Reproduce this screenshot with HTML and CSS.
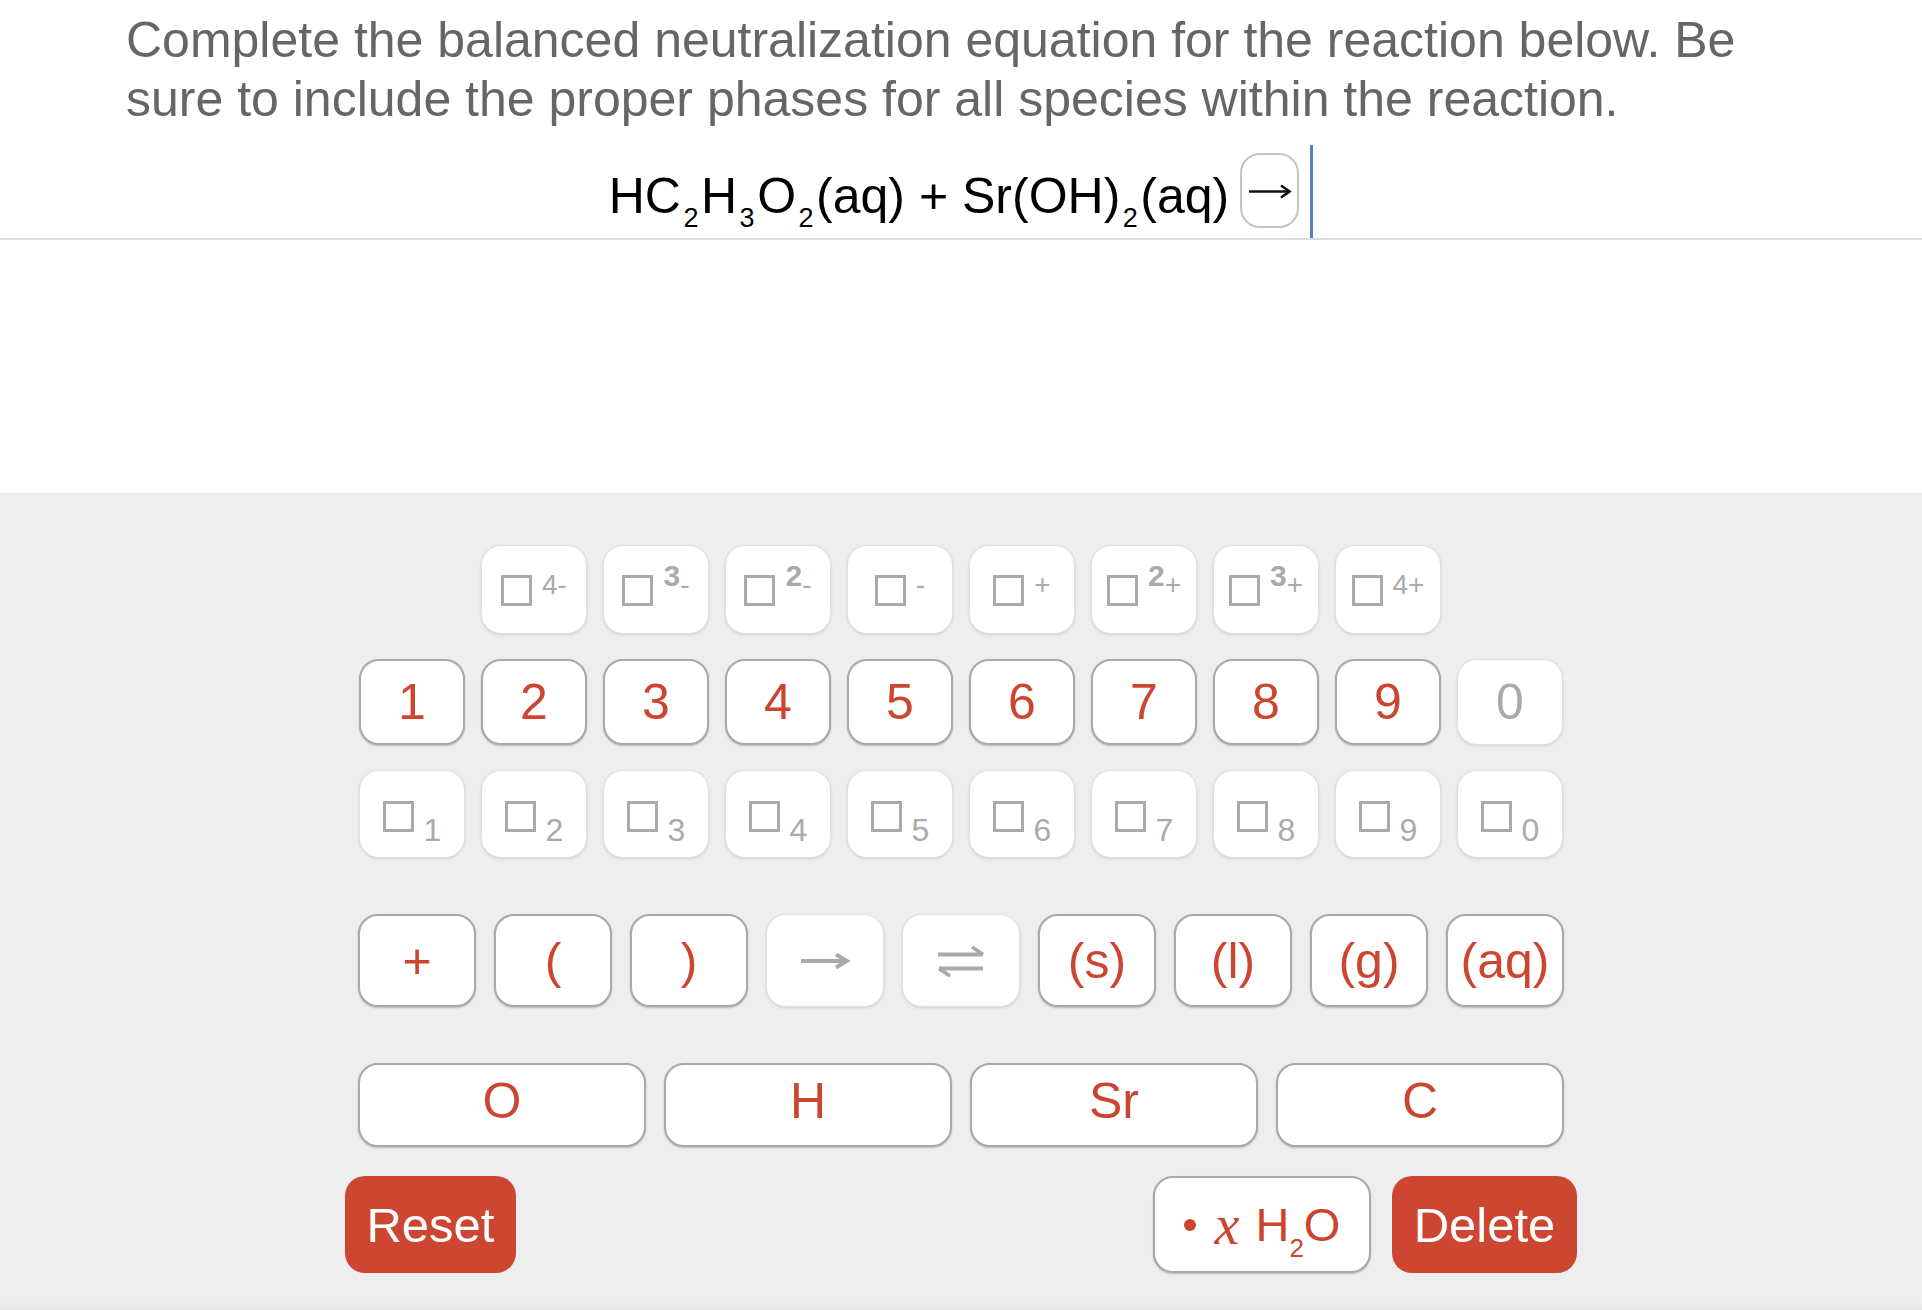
FILE: index.html
```html
<!DOCTYPE html>
<html lang="en">
<head>
<meta charset="utf-8">
<title>Neutralization equation</title>
<link rel="stylesheet" href="styles.css">
</head>
<body>
<p class="prompt">Complete the balanced neutralization equation for the reaction below. Be sure to include the proper phases for all species within the reaction.</p>

<div class="eq">
  <div class="formula">HC<span class="s">2</span>H<span class="s">3</span>O<span class="s">2</span>(aq) + Sr(OH)<span class="s">2</span>(aq)</div>
  <div class="arrowbox">
    <svg width="44" height="16" viewBox="0 0 44 16"><path d="M1 8.5H41" stroke="#111" stroke-width="2.6"/><path d="M33 2.5L41.5 8.5L33 14.5" fill="none" stroke="#111" stroke-width="2.6" stroke-linejoin="miter"/></svg>
  </div>
  <div class="caret"></div>
</div>

<div class="keyboard">
  <div class="row row-sup">
    <div class="key off small"><span class="sq"></span><span class="sup">4-</span></div>
    <div class="key off small"><span class="sq"></span><span class="sup"><span class="hi">3</span>-</span></div>
    <div class="key off small"><span class="sq"></span><span class="sup"><span class="hi">2</span>-</span></div>
    <div class="key off small"><span class="sq"></span><span class="sup">-</span></div>
    <div class="key off small"><span class="sq"></span><span class="sup">+</span></div>
    <div class="key off small"><span class="sq"></span><span class="sup"><span class="hi">2</span>+</span></div>
    <div class="key off small"><span class="sq"></span><span class="sup"><span class="hi">3</span>+</span></div>
    <div class="key off small"><span class="sq"></span><span class="sup">4+</span></div>
  </div>

  <div class="row row-num">
    <div class="key on small">1</div>
    <div class="key on small">2</div>
    <div class="key on small">3</div>
    <div class="key on small">4</div>
    <div class="key on small">5</div>
    <div class="key on small">6</div>
    <div class="key on small">7</div>
    <div class="key on small">8</div>
    <div class="key on small">9</div>
    <div class="key off small">0</div>
  </div>

  <div class="row row-sub">
    <div class="key off small"><span class="sq"></span><span class="subd">1</span></div>
    <div class="key off small"><span class="sq"></span><span class="subd">2</span></div>
    <div class="key off small"><span class="sq"></span><span class="subd">3</span></div>
    <div class="key off small"><span class="sq"></span><span class="subd">4</span></div>
    <div class="key off small"><span class="sq"></span><span class="subd">5</span></div>
    <div class="key off small"><span class="sq"></span><span class="subd">6</span></div>
    <div class="key off small"><span class="sq"></span><span class="subd">7</span></div>
    <div class="key off small"><span class="sq"></span><span class="subd">8</span></div>
    <div class="key off small"><span class="sq"></span><span class="subd">9</span></div>
    <div class="key off small"><span class="sq"></span><span class="subd">0</span></div>
  </div>

  <div class="row row-sym">
    <div class="key on">+</div>
    <div class="key on">(</div>
    <div class="key on">)</div>
    <div class="key off">
      <svg width="50" height="18" viewBox="0 0 50 18"><path d="M1 9H44" stroke="#aaa" stroke-width="4"/><path d="M36 2.5L47 9L36 15.5" fill="none" stroke="#aaa" stroke-width="4"/></svg>
    </div>
    <div class="key off">
      <svg width="48" height="32" viewBox="0 0 48 32"><path d="M1 9.5H46M35 2L46 9.5" fill="none" stroke="#aaa" stroke-width="3.8"/><path d="M2 23.5H46M2 23.5L13 31" fill="none" stroke="#aaa" stroke-width="3.8"/></svg>
    </div>
    <div class="key on">(s)</div>
    <div class="key on">(l)</div>
    <div class="key on">(g)</div>
    <div class="key on">(aq)</div>
  </div>

  <div class="row row-el">
    <div class="key on">O</div>
    <div class="key on">H</div>
    <div class="key on">Sr</div>
    <div class="key on">C</div>
  </div>

  <div class="bottom">
    <div class="btn-red reset">Reset</div>
    <div class="right">
      <div class="key on hydrate"><span class="dot"></span><span class="mx">x</span><span class="h2o">H<span class="s2">2</span>O</span></div>
      <div class="btn-red delete">Delete</div>
    </div>
  </div>
</div>
</body>
</html>
```

FILE: styles.css
```css
html, body {
  margin: 0;
  padding: 0;
  background: #fff;
}

body {
  font-family: "Liberation Sans", Arial, Helvetica, sans-serif;
  width: 1922px;
  height: 1310px;
  overflow: hidden;
}

.prompt {
  margin: 0;
  padding: 11px 0 0 126px;
  max-width: 1660px;
  font-size: 50px;
  line-height: 59px;
  color: #666;
}

.eq {
  height: 109px;
  border-bottom: 2px solid #dcdcdc;
  display: flex;
  justify-content: center;
  align-items: flex-end;
  gap: 11px;
}

.formula {
  font-size: 50px;
  line-height: 50px;
  color: #000;
  white-space: nowrap;
  margin-bottom: 17px;
}

.formula .s {
  font-size: 27px;
  line-height: 0;
  vertical-align: -14px;
  margin: 0 2.5px;
}

.arrowbox {
  box-sizing: border-box;
  width: 59px;
  height: 75px;
  border: 2px solid #c4c4c4;
  border-radius: 20px;
  margin-bottom: 10px;
  display: flex;
  align-items: center;
  justify-content: center;
}

.caret {
  width: 3px;
  height: 93px;
  background: #5b7db3;
}

.keyboard {
  box-sizing: border-box;
  margin-top: 253px;
  height: 817px;
  padding-top: 52px;
  background: linear-gradient(to bottom, #eeeeee calc(100% - 8px), #e4e4e4);
  display: flex;
  flex-direction: column;
  align-items: center;
}

.row {
  display: flex;
  gap: 16px;
}

.key {
  box-sizing: border-box;
  background: #fff;
  border-radius: 20px;
  display: flex;
  align-items: center;
  justify-content: center;
  color: #cc4530;
  font-size: 50px;
  line-height: 1;
}

.key.on {
  border: 2px solid #a9a9a9;
  box-shadow: 0 1px 2px rgba(0, 0, 0, 0.22);
}

.key.off {
  border: 1px solid #e0e0e0;
  box-shadow: 0 1px 3px rgba(0, 0, 0, 0.12);
  color: #aaa;
}

.small {
  width: 106px;
}

.row-sup .key {
  height: 89px;
  align-items: flex-start;
  padding-top: 29px;
}

.row-num {
  margin-top: 25px;
}

.row-num .key {
  height: 86px;
}

.row-sub {
  margin-top: 25px;
}

.row-sub .key {
  height: 88px;
  align-items: flex-start;
  padding-top: 30px;
}

.sq {
  flex: none;
  box-sizing: border-box;
  width: 31px;
  height: 31px;
  border: 3px solid #aaa;
}

.sup {
  font-size: 28px;
  line-height: 28px;
  margin: -4px 0 0 10px;
  color: #aaa;
}

.sup .hi {
  font-weight: bold;
  font-size: 30px;
  line-height: 0;
  vertical-align: 8px;
}

.subd {
  font-size: 32px;
  line-height: 32px;
  margin: 13px 0 0 10px;
  color: #aaa;
}

.row-sym {
  margin-top: 56px;
  gap: 18px;
}

.row-sym .key {
  width: 118px;
  height: 93px;
}

.row-el {
  margin-top: 56px;
  gap: 18px;
}

.row-el .key {
  width: 288px;
  height: 84px;
  padding-bottom: 8px;
}

.bottom {
  width: 1232px;
  margin-top: 29px;
  display: flex;
  justify-content: space-between;
}

.right {
  display: flex;
  gap: 21px;
}

.btn-red {
  box-sizing: border-box;
  height: 97px;
  border-radius: 20px;
  background: #cc4632;
  color: #fff;
  font-size: 49px;
  display: flex;
  align-items: center;
  justify-content: center;
}

.reset {
  width: 171px;
}

.delete {
  width: 185px;
}

.key.hydrate {
  width: 218px;
  height: 97px;
  font-size: 47px;
}

.dot {
  width: 12px;
  height: 12px;
  border-radius: 50%;
  background: #cc4530;
  margin-right: 19px;
}

.mx {
  font-family: "Liberation Serif", "DejaVu Serif", serif;
  font-style: italic;
  font-size: 56px;
  margin-right: 16px;
}

.h2o .s2 {
  font-size: 26px;
  line-height: 0;
  vertical-align: -16px;
}
```
